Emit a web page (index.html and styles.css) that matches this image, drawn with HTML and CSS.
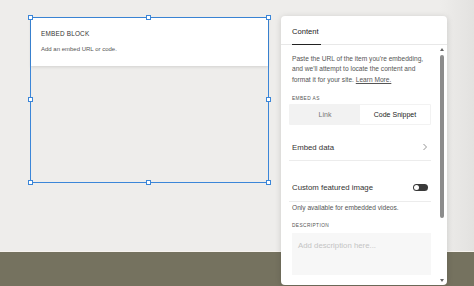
FILE: index.html
```html
<!DOCTYPE html>
<html>
<head>
    <title>Embed Block</title>
    <link rel="stylesheet" href="styles.css">
</head>
<body>
    <div id="canvas">
        <div id="block">
            <div class="handle tl"></div>
            <div class="handle tm"></div>
            <div class="handle tr"></div>
            <div class="handle ml"></div>
            <div class="handle mr"></div>
            <div class="handle bl"></div>
            <div class="handle bm"></div>
            <div class="handle br"></div>
            <div class="block-card">
                <div class="block-title">EMBED BLOCK</div>
                <div class="block-hint">Add an embed URL or code.</div>
            </div>
        </div>
    </div>
    <div id="footer"></div>

    <div id="panel">
        <div class="tabs">
            <div class="tab active">Content</div>
        </div>
        <div class="panel-body">
            <div class="panel-scroll">
                <p class="intro">Paste the URL of the item you're embedding, and we'll attempt to locate the content and format it for your site. <a href="#">Learn More.</a></p>
                <div class="label">EMBED AS</div>
                <div class="segmented">
                    <div class="seg">Link</div>
                    <div class="seg selected">Code Snippet</div>
                </div>
                <div class="row">
                    <span>Embed data</span>
                    <svg width="6" height="8" viewBox="0 0 6 8"><path d="M1.5 1 L4.5 4 L1.5 7" fill="none" stroke="#888" stroke-width="0.9"/></svg>
                </div>
                <div class="row toggle-row">
                    <span>Custom featured image</span>
                    <div class="toggle"><div class="knob"></div></div>
                </div>
                <div class="note">Only available for embedded videos.</div>
                <div class="label desc">DESCRIPTION</div>
                <div class="textarea">Add description here...</div>
            </div>
            <div class="scrollbar">
                <div class="arrow up"></div>
                <div class="thumb"></div>
                <div class="arrow down"></div>
            </div>
        </div>
    </div>
</body>
</html>
```
FILE: styles.css
```css
body {
    font-family: "Liberation Sans", Arial, sans-serif;
    margin: 0;
    padding: 0;
    width: 474px;
    height: 286px;
    overflow: hidden;
    background-color: #75725f;
}

#canvas {
    height: 252px;
    background: linear-gradient(to right, #eeedeb 0, #eeedeb 440px, #e3e2e0 474px);
    border-bottom: 1px solid #f7f3ee;
    padding-top: 17px;
    box-sizing: border-box;
}

#footer {
    height: 34px;
    background-color: #75725f;
}

#block {
    position: relative;
    margin-left: 30px;
    width: 239px;
    height: 166px;
    border: 1.5px solid #3b86d8;
    box-sizing: border-box;
}

.block-card {
    background-color: #fff;
    height: 48px;
    padding: 12px 10px 0 10px;
    box-sizing: border-box;
    box-shadow: 0 1px 3px rgba(0, 0, 0, 0.12);
}

.block-title {
    font-size: 6.4px;
    color: #333;
    letter-spacing: 0.2px;
}

.block-hint {
    font-size: 6px;
    color: #555;
    margin-top: 9px;
}

.handle {
    position: absolute;
    width: 3px;
    height: 3px;
    background-color: #fff;
    border: 1.3px solid #3b86d8;
    z-index: 2;
}

.tl { left: -3.3px; top: -3.3px; }
.tm { left: 115px; top: -3.3px; }
.tr { right: -3.3px; top: -3.3px; }
.ml { left: -3.3px; top: 79px; }
.mr { right: -3.3px; top: 79px; }
.bl { left: -3.3px; bottom: -3.3px; }
.bm { left: 115px; bottom: -3.3px; }
.br { right: -3.3px; bottom: -3.3px; }

#panel {
    position: absolute;
    left: 281px;
    top: 16px;
    width: 166px;
    height: 269px;
    background-color: #fff;
    border-radius: 4px;
    box-shadow: 0 1px 6px rgba(0, 0, 0, 0.15);
    display: flex;
    flex-direction: column;
    overflow: hidden;
}

.tabs {
    height: 28px;
    border-bottom: 1px solid #e8e8e8;
    padding-left: 11px;
    display: flex;
    align-items: flex-end;
}

.tab {
    font-size: 7.6px;
    color: #222;
    padding-bottom: 8px;
    border-bottom: 1.2px solid #222;
    margin-bottom: -1px;
    width: 29px;
}

.panel-body {
    flex: 1;
    display: flex;
}

.panel-scroll {
    flex: 1;
    padding: 9px 8px 0 8px;
}

.intro {
    font-size: 6.6px;
    line-height: 10.4px;
    color: #555;
    margin: 0 0 0 3px;
    max-width: 133px;
}

.intro a {
    color: #555;
}

.label {
    font-size: 4.8px;
    letter-spacing: 0.4px;
    color: #555;
    margin: 11px 0 0 3px;
}

.segmented {
    display: flex;
    margin-top: 3px;
    height: 19px;
    background-color: #f2f2f2;
    border: 1px solid #f2f2f2;
    border-radius: 1px;
}

.seg {
    flex: 1;
    display: flex;
    align-items: center;
    justify-content: center;
    font-size: 7px;
    color: #777;
}

.seg.selected {
    background-color: #fff;
    color: #222;
}

.row {
    display: flex;
    justify-content: space-between;
    align-items: flex-end;
    height: 36px;
    border-bottom: 1px solid #ececec;
    padding: 0 3px 8px 3px;
    box-sizing: border-box;
    font-size: 7.8px;
    color: #333;
}

.row svg {
    margin-bottom: 1px;
}

.toggle-row {
    height: 41px;
    padding-bottom: 9px;
}

.toggle {
    width: 15px;
    height: 7px;
    border-radius: 4px;
    background-color: #3a3a3a;
    position: relative;
    margin-bottom: 1px;
}

.knob {
    position: absolute;
    left: 1px;
    top: 1px;
    width: 5px;
    height: 5px;
    border-radius: 50%;
    background-color: #fff;
}

.note {
    font-size: 6.6px;
    color: #555;
    margin: 2px 0 0 3px;
}

.label.desc {
    margin-top: 12px;
}

.textarea {
    margin: 5px 0 0 3px;
    height: 42px;
    background-color: #f7f7f7;
    padding: 8px 6px;
    box-sizing: border-box;
    font-size: 7.8px;
    color: #c4c4c4;
}

.scrollbar {
    width: 6px;
    display: flex;
    flex-direction: column;
    align-items: center;
    margin-right: 2px;
}

.arrow {
    width: 0;
    height: 0;
    border-left: 2.5px solid transparent;
    border-right: 2.5px solid transparent;
}

.arrow.up {
    margin-top: 3px;
    border-bottom: 3px solid #666;
}

.arrow.down {
    margin-top: auto;
    margin-bottom: 3px;
    border-top: 3px solid #666;
}

.thumb {
    width: 4px;
    height: 163px;
    margin-top: 4px;
    background-color: #8c8c8c;
    border-radius: 2px;
}
```
